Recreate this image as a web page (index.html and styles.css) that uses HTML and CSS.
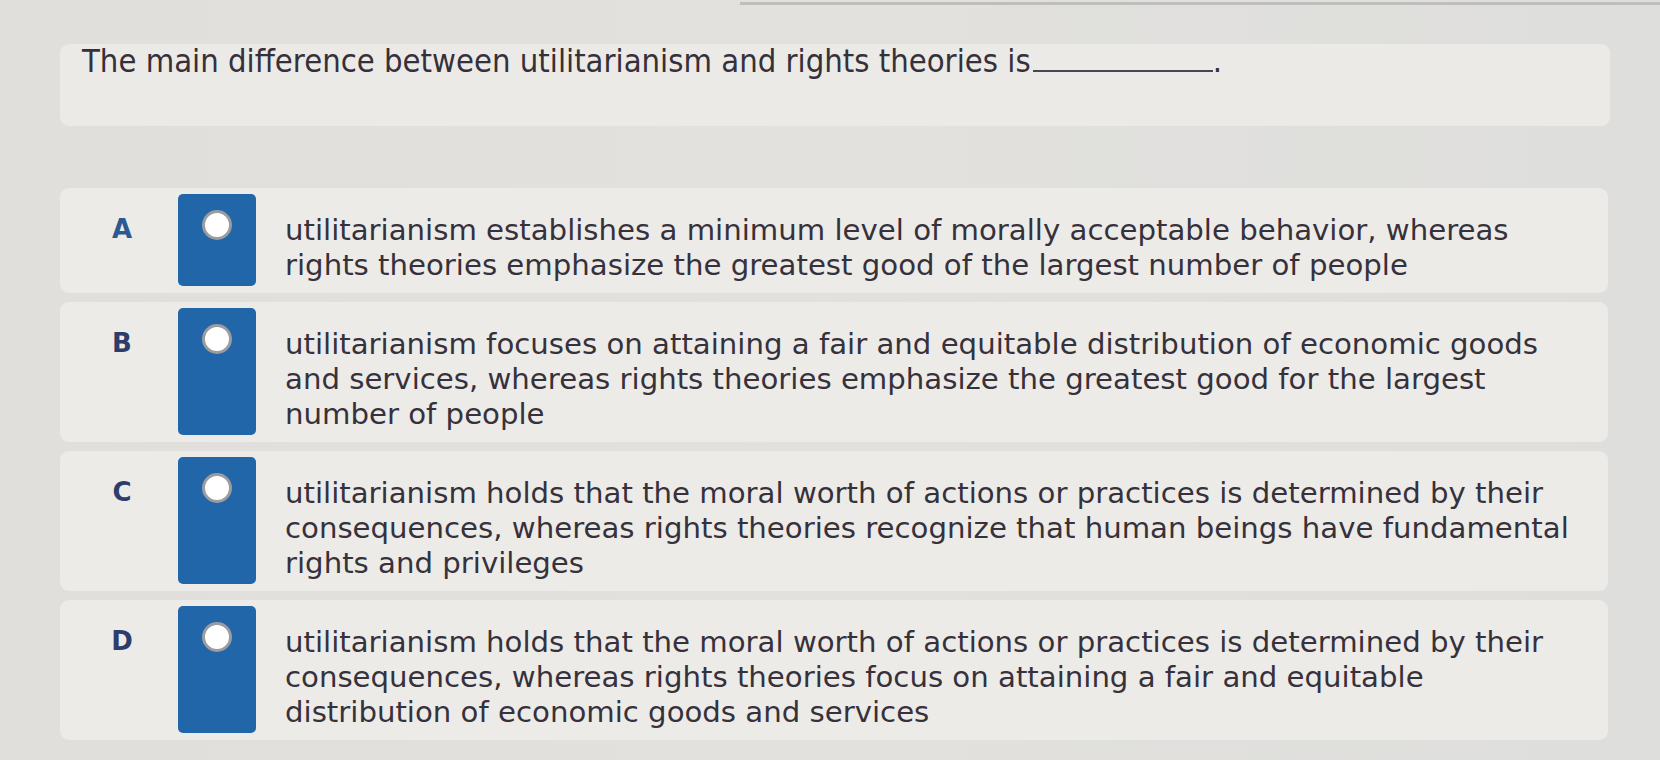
FILE: index.html
```html
<!DOCTYPE html>
<html lang="en">
<head>
<meta charset="utf-8">
<title>Question</title>
<link rel="stylesheet" href="styles.css">
</head>
<body>
<div class="topline"></div>
<main class="page">
  <section class="question">
    <p class="prompt">The main difference between utilitarianism and rights theories is<span class="blank"></span>.</p>
  </section>
  <section class="options">
    <div class="option">
      <div class="label label-a">A</div>
      <div class="radiobox"><span class="radio"></span></div>
      <div class="text">utilitarianism establishes a minimum level of morally acceptable behavior, whereas rights theories emphasize the greatest good of the largest number of people</div>
    </div>
    <div class="option">
      <div class="label">B</div>
      <div class="radiobox"><span class="radio"></span></div>
      <div class="text">utilitarianism focuses on attaining a fair and equitable distribution of economic goods and services, whereas rights theories emphasize the greatest good for the largest number of people</div>
    </div>
    <div class="option">
      <div class="label">C</div>
      <div class="radiobox"><span class="radio"></span></div>
      <div class="text">utilitarianism holds that the moral worth of actions or practices is determined by their consequences, whereas rights theories recognize that human beings have fundamental rights and privileges</div>
    </div>
    <div class="option">
      <div class="label">D</div>
      <div class="radiobox"><span class="radio"></span></div>
      <div class="text">utilitarianism holds that the moral worth of actions or practices is determined by their consequences, whereas rights theories focus on attaining a fair and equitable distribution of economic goods and services</div>
    </div>
  </section>
</main>
</body>
</html>
```
FILE: styles.css
```css
html, body {
  margin: 0;
  padding: 0;
}
body {
  width: 1660px;
  height: 760px;
  overflow: hidden;
  background: linear-gradient(90deg, #e0dfdb 0%, #e2e1de 50%, #dededc 100%);
  font-family: "DejaVu Sans", Verdana, sans-serif;
  color: #36313b;
}
.topline {
  height: 3px;
  margin: 2px 0 0 740px;
  background: #bebebc;
}
.page {
  padding: 0 50px 0 60px;
}
.question {
  margin-top: 39px;
  height: 82px;
  background: #ebeae7;
  border-radius: 9px;
  padding: 0 22px;
}
.prompt {
  margin: 0;
  padding-top: 0;
  font-family: "DejaVu Sans Condensed", "DejaVu Sans", sans-serif;
  font-size: 32.5px;
  line-height: 34px;
  color: #35303a;
}
.blank {
  display: inline-block;
  width: 180px;
  height: 2px;
  background: #4a4550;
  vertical-align: baseline;
  margin-left: 2px;
}
.options {
  margin-top: 62px;
  display: flex;
  flex-direction: column;
  gap: 9px;
  margin-right: 2px;
}
.option {
  display: flex;
  align-items: stretch;
  padding: 6px 33px 7px 6px;
  background: #ecebe8;
  border-radius: 9px;
}
.label {
  flex: none;
  width: 112px;
  text-align: center;
  padding-top: 18px;
  font-family: "DejaVu Sans", Verdana, sans-serif;
  font-weight: bold;
  font-size: 26px;
  line-height: 35px;
  color: #2d3d6b;
}
.label-a {
  color: #2b5a93;
}
.radiobox {
  flex: none;
  width: 78px;
  background: #2166a9;
  border-radius: 5px;
  display: flex;
  justify-content: center;
  align-items: flex-start;
  padding-top: 16px;
  box-sizing: border-box;
}
.radio {
  width: 24px;
  height: 24px;
  border-radius: 50%;
  background: #ffffff;
  border: 3px solid #9a9ca0;
}
.text {
  flex: 1;
  margin-left: 29px;
  padding: 19px 0 3px;
  font-size: 29.2px;
  line-height: 35px;
  color: #36313b;
}
```
